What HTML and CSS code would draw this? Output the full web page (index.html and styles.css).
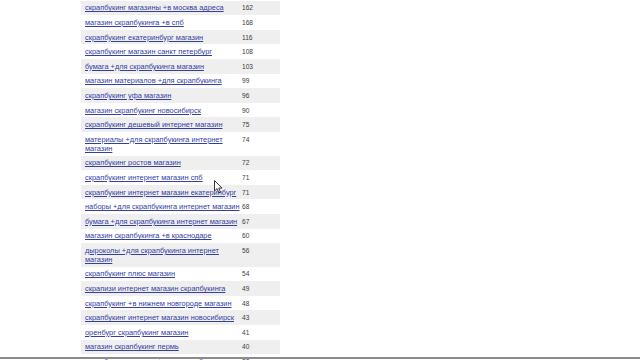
FILE: index.html
```html
<!DOCTYPE html>
<html lang="ru">
<head>
<meta charset="utf-8">
<title>Статистика запросов</title>
<link rel="stylesheet" href="styles.css">
</head>
<body>
<div class="page">
  <table class="stats">
    <tbody>
      <tr><td class="q"><a href="#">скрапбукинг магазины +в москва адреса</a></td><td class="n">162</td></tr>
      <tr><td class="q"><a href="#">магазин скрапбукинга +в спб</a></td><td class="n">168</td></tr>
      <tr><td class="q"><a href="#">скрапбукинг екатеринбург магазин</a></td><td class="n">116</td></tr>
      <tr><td class="q"><a href="#">скрапбукинг магазин санкт петербург</a></td><td class="n">108</td></tr>
      <tr><td class="q"><a href="#">бумага +для скрапбукинга магазин</a></td><td class="n">103</td></tr>
      <tr><td class="q"><a href="#">магазин материалов +для скрапбукинга</a></td><td class="n">99</td></tr>
      <tr><td class="q"><a href="#">скрапбукинг уфа магазин</a></td><td class="n">96</td></tr>
      <tr><td class="q"><a href="#">магазин скрапбукинг новосибирск</a></td><td class="n">90</td></tr>
      <tr><td class="q"><a href="#">скрапбукинг дешевый интернет магазин</a></td><td class="n">75</td></tr>
      <tr><td class="q"><a href="#">материалы +для скрапбукинга интернет<br>магазин</a></td><td class="n">74</td></tr>
      <tr><td class="q"><a href="#">скрапбукинг ростов магазин</a></td><td class="n">72</td></tr>
      <tr><td class="q"><a href="#">скрапбукинг интернет магазин спб</a></td><td class="n">71</td></tr>
      <tr><td class="q"><a href="#">скрапбукинг интернет магазин екатеринбург</a></td><td class="n">71</td></tr>
      <tr><td class="q"><a href="#">наборы +для скрапбукинга интернет магазин</a></td><td class="n">68</td></tr>
      <tr><td class="q"><a href="#">бумага +для скрапбукинга интернет магазин</a></td><td class="n">67</td></tr>
      <tr><td class="q"><a href="#">магазин скрапбукинга +в краснодаре</a></td><td class="n">60</td></tr>
      <tr><td class="q"><a href="#">дыроколы +для скрапбукинга интернет<br>магазин</a></td><td class="n">56</td></tr>
      <tr><td class="q"><a href="#">скрапбукинг плюс магазин</a></td><td class="n">54</td></tr>
      <tr><td class="q"><a href="#">скрапизи интернет магазин скрапбукинга</a></td><td class="n">49</td></tr>
      <tr><td class="q"><a href="#">скрапбукинг +в нижнем новгороде магазин</a></td><td class="n">48</td></tr>
      <tr><td class="q"><a href="#">скрапбукинг интернет магазин новосибирск</a></td><td class="n">43</td></tr>
      <tr><td class="q"><a href="#">оренбург скрапбукинг магазин</a></td><td class="n">41</td></tr>
      <tr><td class="q"><a href="#">магазин скрапбукинг пермь</a></td><td class="n">40</td></tr>
      <tr><td class="q"><a href="#">скрапбукинг магазин +в екатеринбурге</a></td><td class="n">38</td></tr>
    </tbody>
  </table>
</div>
<div class="player-bar"></div>
<svg class="cursor" width="9" height="14" viewBox="0 0 9 14" aria-hidden="true">
  <path d="M0.5 0.5 L0.5 11 L3 8.6 L4.8 12.8 L6.4 12.1 L4.7 8.1 L8 8.1 Z" fill="#fff" stroke="#222" stroke-width="0.9" stroke-linejoin="round"/>
</svg>
</body>
</html>
```

FILE: styles.css
```css
html, body {
  margin: 0;
  padding: 0;
  background: #ffffff;
  overflow: hidden;
}

body {
  width: 640px;
  height: 360px;
  position: relative;
  font-family: "Liberation Sans", Arial, sans-serif;
}

.page {
  padding: 0.6px 0 0 81px;
}

.stats {
  border-collapse: collapse;
  width: 199px;
  table-layout: fixed;
}

.stats td {
  padding: 2.8px 0 2.8px 4px;
  vertical-align: top;
  line-height: 9px;
}

.stats tr:nth-child(odd) td {
  background: #efefef;
}

.stats .q {
  width: 153px;
  font-size: 7.4px;
  white-space: nowrap;
}

.stats .q a {
  color: #34409f;
  text-decoration: underline;
}

.stats .n {
  font-size: 6.6px;
  color: #3c3c3c;
}

.player-bar {
  position: absolute;
  left: 0;
  right: 0;
  top: 357px;
  height: 2px;
  background: #8c8c8c;
}

.cursor {
  position: absolute;
  left: 214px;
  top: 180px;
}
```
